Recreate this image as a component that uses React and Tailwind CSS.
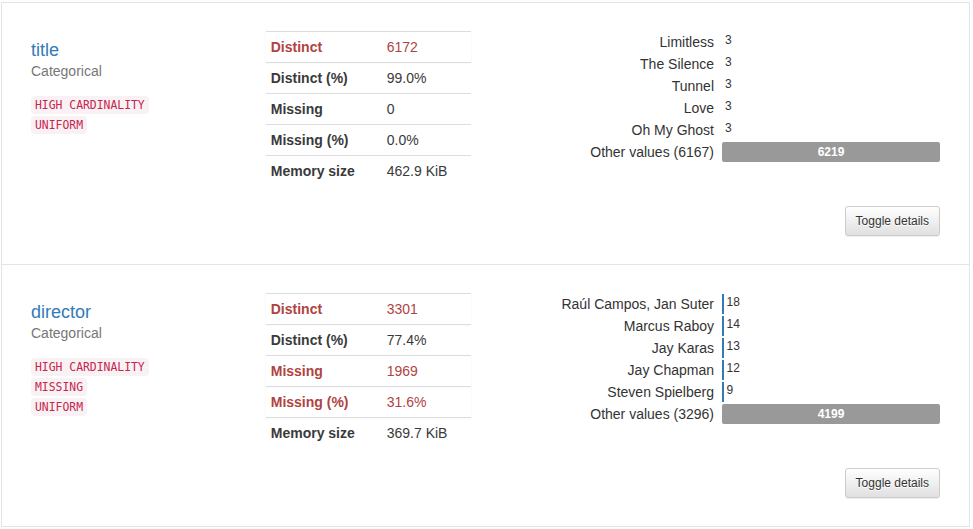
import React from 'react';

const variables = [
  {
    name: 'title',
    type: 'Categorical',
    warnings: ['HIGH CARDINALITY', 'UNIFORM'],
    stats: [
      { label: 'Distinct', value: '6172', alert: true },
      { label: 'Distinct (%)', value: '99.0%' },
      { label: 'Missing', value: '0' },
      { label: 'Missing (%)', value: '0.0%' },
      { label: 'Memory size', value: '462.9 KiB' },
    ],
    freq: [
      { label: 'Limitless', count: 3 },
      { label: 'The Silence', count: 3 },
      { label: 'Tunnel', count: 3 },
      { label: 'Love', count: 3 },
      { label: 'Oh My Ghost', count: 3 },
    ],
    other: { label: 'Other values (6167)', count: 6219 },
  },
  {
    name: 'director',
    type: 'Categorical',
    warnings: ['HIGH CARDINALITY', 'MISSING', 'UNIFORM'],
    stats: [
      { label: 'Distinct', value: '3301', alert: true },
      { label: 'Distinct (%)', value: '77.4%' },
      { label: 'Missing', value: '1969', alert: true },
      { label: 'Missing (%)', value: '31.6%', alert: true },
      { label: 'Memory size', value: '369.7 KiB' },
    ],
    freq: [
      { label: 'Raúl Campos, Jan Suter', count: 18 },
      { label: 'Marcus Raboy', count: 14 },
      { label: 'Jay Karas', count: 13 },
      { label: 'Jay Chapman', count: 12 },
      { label: 'Steven Spielberg', count: 9 },
    ],
    other: { label: 'Other values (3296)', count: 4199 },
  },
];

const BAR_WIDTH = 218;

function StatsTable({ stats }) {
  return (
    <div className="text-[14px] leading-[20px]">
      {stats.map((s) => (
        <div
          key={s.label}
          className={
            'flex border-t border-[#dddddd] py-[5px] ' +
            (s.alert ? 'text-[#b0433f] shadow-[0_1px_2px_rgba(0,0,0,0.06)]' : 'text-[#3a3a3a]')
          }
        >
          <div className="w-[116px] pl-[5px] font-bold">{s.label}</div>
          <div className="pl-[5px]">{s.value}</div>
        </div>
      ))}
    </div>
  );
}

function FreqChart({ freq, other }) {
  const max = other.count;
  return (
    <div className="flex flex-col gap-[2px] pt-[1px] text-[14px] text-[#333333]">
      {freq.map((f) => {
        const w = (f.count / max) * BAR_WIDTH;
        return (
          <div key={f.label} className="flex h-[20px]">
            <div className="flex-1 pr-[8px] text-right leading-[20px] whitespace-nowrap">{f.label}</div>
            <div className="flex w-[218px] items-stretch">
              <div className="bg-[#337ab7]" style={{ width: w < 0.3 ? 0 : Math.max(w, 1.5) }} />
              <span className="ml-[3px] text-[12px] leading-[16px]">{f.count}</span>
            </div>
          </div>
        );
      })}
      <div className="flex h-[20px]">
        <div className="flex-1 pr-[8px] text-right leading-[20px] whitespace-nowrap">{other.label}</div>
        <div className="flex w-[218px] items-center justify-center rounded-[2px] bg-[#999999] text-[12px] font-bold leading-[20px] text-white">
          {other.count}
        </div>
      </div>
    </div>
  );
}

function VariableRow({ v, last }) {
  return (
    <div className={'border-t border-[#e3e3ea] px-[14px] pt-[28px] pb-[28px] ' + (last ? 'border-b' : '')}>
      <div className="flex">
        <div className="w-1/4 px-[15px] pt-[10px]">
          <div className="text-[18px] leading-[19.8px] text-[#337ab7]">{v.name}</div>
          <div className="text-[14px] leading-[20px] text-[#777777]">{v.type}</div>
          <div className="mt-[15px] flex flex-col items-start gap-[2px]">
            {v.warnings.map((w) => (
              <code
                key={w}
                className="h-[18px] rounded-[4px] bg-[#f9f2f4] px-[4px] font-['DejaVu_Sans_Mono',monospace] text-[11.4px] leading-[18px] text-[#c7254e]"
              >
                {w}
              </code>
            ))}
          </div>
        </div>
        <div className="w-1/4 px-[15px]">
          <StatsTable stats={v.stats} />
        </div>
        <div className="w-1/2 px-[15px]">
          <FreqChart freq={v.freq} other={v.other} />
        </div>
      </div>
      <div className="mt-[20px] flex justify-end px-[15px]">
        <button className="h-[30px] rounded-[3px] border border-[#cccccc] bg-gradient-to-b from-white to-[#e0e0e0] px-[10px] text-[12px] leading-[18px] text-[#333333] shadow-[0_1px_1px_rgba(0,0,0,0.075)] [text-shadow:0_1px_0_#fff]">
          Toggle details
        </button>
      </div>
    </div>
  );
}

export default function App() {
  return (
    <div className="min-h-screen bg-white pt-[2px] font-['Liberation_Sans',Arial,sans-serif]">
      <div className="ml-[1px] w-[969px] border-x border-[#e3e3ea]">
        {variables.map((v, i) => (
          <VariableRow key={v.name} v={v} last={i === variables.length - 1} />
        ))}
      </div>
    </div>
  );
}
